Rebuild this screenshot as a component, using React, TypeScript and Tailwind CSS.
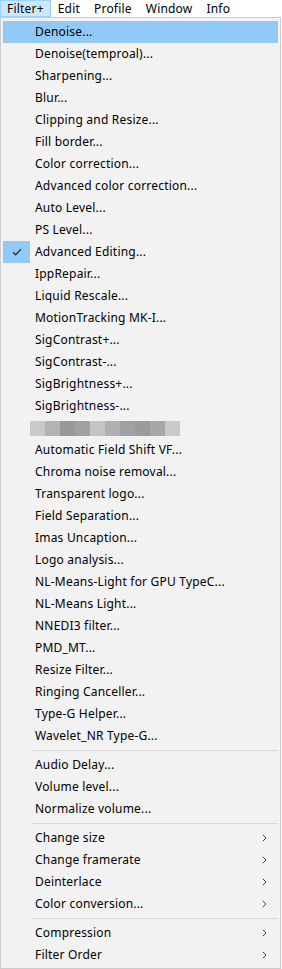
import type { ReactNode } from 'react';

type Entry =
  | { kind: 'item'; label: string; active?: boolean; checked?: boolean; sub?: boolean }
  | { kind: 'sep' }
  | { kind: 'blur' };

const entries: Entry[] = [
  { kind: 'item', label: 'Denoise...', active: true },
  { kind: 'item', label: 'Denoise(temproal)...' },
  { kind: 'item', label: 'Sharpening...' },
  { kind: 'item', label: 'Blur...' },
  { kind: 'item', label: 'Clipping and Resize...' },
  { kind: 'item', label: 'Fill border...' },
  { kind: 'item', label: 'Color correction...' },
  { kind: 'item', label: 'Advanced color correction...' },
  { kind: 'item', label: 'Auto Level...' },
  { kind: 'item', label: 'PS Level...' },
  { kind: 'item', label: 'Advanced Editing...', checked: true },
  { kind: 'item', label: 'IppRepair...' },
  { kind: 'item', label: 'Liquid Rescale...' },
  { kind: 'item', label: 'MotionTracking MK-I...' },
  { kind: 'item', label: 'SigContrast+...' },
  { kind: 'item', label: 'SigContrast-...' },
  { kind: 'item', label: 'SigBrightness+...' },
  { kind: 'item', label: 'SigBrightness-...' },
  { kind: 'blur' },
  { kind: 'item', label: 'Automatic Field Shift VF...' },
  { kind: 'item', label: 'Chroma noise removal...' },
  { kind: 'item', label: 'Transparent logo...' },
  { kind: 'item', label: 'Field Separation...' },
  { kind: 'item', label: 'Imas Uncaption...' },
  { kind: 'item', label: 'Logo analysis...' },
  { kind: 'item', label: 'NL-Means-Light for GPU TypeC...' },
  { kind: 'item', label: 'NL-Means Light...' },
  { kind: 'item', label: 'NNEDI3 filter...' },
  { kind: 'item', label: 'PMD_MT...' },
  { kind: 'item', label: 'Resize Filter...' },
  { kind: 'item', label: 'Ringing Canceller...' },
  { kind: 'item', label: 'Type-G Helper...' },
  { kind: 'item', label: 'Wavelet_NR Type-G...' },
  { kind: 'sep' },
  { kind: 'item', label: 'Audio Delay...' },
  { kind: 'item', label: 'Volume level...' },
  { kind: 'item', label: 'Normalize volume...' },
  { kind: 'sep' },
  { kind: 'item', label: 'Change size', sub: true },
  { kind: 'item', label: 'Change framerate', sub: true },
  { kind: 'item', label: 'Deinterlace', sub: true },
  { kind: 'item', label: 'Color conversion...', sub: true },
  { kind: 'sep' },
  { kind: 'item', label: 'Compression', sub: true },
  { kind: 'item', label: 'Filter Order', sub: true },
];

// pixelated (censored) entry
const blurBlocks = [
  'bg-[#c9c9c9]', 'bg-[#b3b3b3]', 'bg-[#999896]', 'bg-[#a0a1a3]', 'bg-[#c4c4c4]',
  'bg-[#b0b0b0]', 'bg-[#9ea2a6]', 'bg-[#9c9b99]', 'bg-[#a8a6a6]', 'bg-[#c8c9cb]',
];

function Check() {
  return (
    <svg width="10" height="8" viewBox="0 0 10 8" fill="none">
      <path d="M1 4.2 L3.6 6.8 L9 1.2" stroke="#333" strokeWidth="1.3" />
    </svg>
  );
}

function Chevron() {
  return (
    <svg width="5" height="8" viewBox="0 0 5 8" fill="none">
      <path d="M0.8 0.8 L4 4 L0.8 7.2" stroke="#444" strokeWidth="1" />
    </svg>
  );
}

function MenuTitle({ children, open }: { children: ReactNode; open?: boolean }) {
  return (
    <div
      className={
        open
          ? 'h-[17px] pl-[6px] pr-[6px] flex items-center border border-[#99d1ff] bg-[#cce8ff]'
          : 'h-[17px] px-[7px] flex items-center'
      }
    >
      {children}
    </div>
  );
}

export default function App() {
  return (
    <div className="w-[282px] h-[969px] bg-white text-[12px] tracking-[0.2px] text-black font-['Noto_Sans','Noto_Sans_CJK_SC',sans-serif] leading-none">
      <div className="flex h-[17px]">
        <MenuTitle open>Filter+</MenuTitle>
        <MenuTitle>Edit</MenuTitle>
        <MenuTitle>Profile</MenuTitle>
        <MenuTitle>Window</MenuTitle>
        <MenuTitle>Info</MenuTitle>
      </div>

      <div className="w-[281px] h-[952px] border border-[#cccccc] bg-[#f2f2f2] pt-[3px] pb-[2px] px-[2px] flex flex-col">
        {entries.map((e, i) => {
          if (e.kind === 'sep') {
            return (
              <div key={i} className="h-[7px] flex items-center pl-[28px]">
                <div className="h-px flex-1 bg-[#d7d7d7]" />
              </div>
            );
          }
          if (e.kind === 'blur') {
            return (
              <div key={i} className="h-[22px] flex items-center pl-[27px]">
                <div className="flex h-[15px]">
                  {blurBlocks.map((b, j) => (
                    <div key={j} className={`w-[15px] h-full ${b}`} />
                  ))}
                </div>
              </div>
            );
          }
          return (
            <div
              key={i}
              className={`h-[22px] flex items-center ${e.active ? 'bg-[#91c9f7]' : ''}`}
            >
              <div className={`w-[27px] h-full flex items-center justify-center ${e.checked ? 'bg-[#91c9f7]' : ''}`}>
                {e.checked && <Check />}
              </div>
              <span className="pl-[5px] flex-1">{e.label}</span>
              {e.sub && (
                <span className="w-[12px] mr-[8px] flex items-center justify-center">
                  <Chevron />
                </span>
              )}
            </div>
          );
        })}
      </div>
    </div>
  );
}
